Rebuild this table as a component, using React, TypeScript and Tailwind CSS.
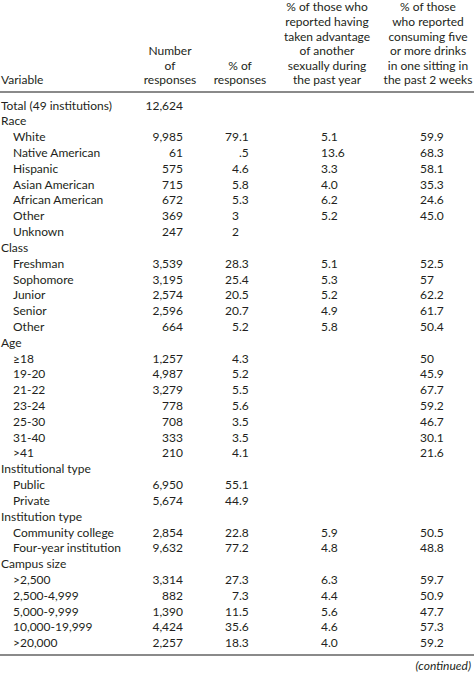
import React from 'react';

type Row = {
  label: string;
  sub?: boolean;
  n?: string;
  pct?: string;
  adv?: string;
  drink?: string;
};

const rows: Row[] = [
  { label: 'Total (49 institutions)', n: '12,624' },
  { label: 'Race' },
  { label: 'White', sub: true, n: '9,985', pct: '79.1', adv: '5.1', drink: '59.9' },
  { label: 'Native American', sub: true, n: '61', pct: '.5', adv: '13.6', drink: '68.3' },
  { label: 'Hispanic', sub: true, n: '575', pct: '4.6', adv: '3.3', drink: '58.1' },
  { label: 'Asian American', sub: true, n: '715', pct: '5.8', adv: '4.0', drink: '35.3' },
  { label: 'African American', sub: true, n: '672', pct: '5.3', adv: '6.2', drink: '24.6' },
  { label: 'Other', sub: true, n: '369', pct: '3', adv: '5.2', drink: '45.0' },
  { label: 'Unknown', sub: true, n: '247', pct: '2' },
  { label: 'Class' },
  { label: 'Freshman', sub: true, n: '3,539', pct: '28.3', adv: '5.1', drink: '52.5' },
  { label: 'Sophomore', sub: true, n: '3,195', pct: '25.4', adv: '5.3', drink: '57' },
  { label: 'Junior', sub: true, n: '2,574', pct: '20.5', adv: '5.2', drink: '62.2' },
  { label: 'Senior', sub: true, n: '2,596', pct: '20.7', adv: '4.9', drink: '61.7' },
  { label: 'Other', sub: true, n: '664', pct: '5.2', adv: '5.8', drink: '50.4' },
  { label: 'Age' },
  { label: '≥18', sub: true, n: '1,257', pct: '4.3', drink: '50' },
  { label: '19-20', sub: true, n: '4,987', pct: '5.2', drink: '45.9' },
  { label: '21-22', sub: true, n: '3,279', pct: '5.5', drink: '67.7' },
  { label: '23-24', sub: true, n: '778', pct: '5.6', drink: '59.2' },
  { label: '25-30', sub: true, n: '708', pct: '3.5', drink: '46.7' },
  { label: '31-40', sub: true, n: '333', pct: '3.5', drink: '30.1' },
  { label: '>41', sub: true, n: '210', pct: '4.1', drink: '21.6' },
  { label: 'Institutional type' },
  { label: 'Public', sub: true, n: '6,950', pct: '55.1' },
  { label: 'Private', sub: true, n: '5,674', pct: '44.9' },
  { label: 'Institution type' },
  { label: 'Community college', sub: true, n: '2,854', pct: '22.8', adv: '5.9', drink: '50.5' },
  { label: 'Four-year institution', sub: true, n: '9,632', pct: '77.2', adv: '4.8', drink: '48.8' },
  { label: 'Campus size' },
  { label: '>2,500', sub: true, n: '3,314', pct: '27.3', adv: '6.3', drink: '59.7' },
  { label: '2,500-4,999', sub: true, n: '882', pct: '7.3', adv: '4.4', drink: '50.9' },
  { label: '5,000-9,999', sub: true, n: '1,390', pct: '11.5', adv: '5.6', drink: '47.7' },
  { label: '10,000-19,999', sub: true, n: '4,424', pct: '35.6', adv: '4.6', drink: '57.3' },
  { label: '>20,000', sub: true, n: '2,257', pct: '18.3', adv: '4.0', drink: '59.2' },
];

function splitPct(p?: string) {
  if (!p) return ['', ''];
  const i = p.indexOf('.');
  if (i < 0) return [p, ''];
  return [p.slice(0, i), p.slice(i)];
}

function HeadCell({ lines, className }: { lines: string[]; className: string }) {
  return (
    <div className={`flex flex-col items-center shrink-0 whitespace-nowrap ${className}`}>
      {lines.map((l, i) => (
        <span key={i}>{l}</span>
      ))}
    </div>
  );
}

export default function App() {
  return (
    <div
      className="w-[474px] h-[680px] bg-white text-[#231f20] text-[12px] leading-[14.6px] overflow-hidden"
      style={{ fontFamily: 'Lato, "Noto Sans", sans-serif' }}
    >
      {/* header */}
      <div className="flex items-end h-[91px] pb-[3px] overflow-hidden">
        <div className="w-[145px] shrink-0 pl-[1px]">Variable</div>
        <HeadCell className="w-[50px]" lines={['Number', 'of', 'responses']} />
        <HeadCell className="w-[90px]" lines={['% of', 'responses']} />
        <HeadCell
          className="w-[84px]"
          lines={['% of those who', 'reported having', 'taken advantage', 'of another', 'sexually during', 'the past year']}
        />
        <HeadCell
          className="w-[116px] ml-[1px]"
          lines={['% of those', 'who reported', 'consuming five', 'or more drinks', 'in one sitting in', 'the past 2 weeks']}
        />
      </div>
      <div className="h-[2px] bg-[#8a8a8a]" />

      {/* body */}
      <div className="pt-[5px] pb-[3px]">
        {rows.map((r, i) => {
          const [whole, frac] = splitPct(r.pct);
          return (
            <div key={i} className="flex h-[15.82px] items-center whitespace-nowrap">
              <div className={`w-[140px] ${r.sub ? 'pl-[13px]' : 'pl-[1px]'}`}>{r.label}</div>
              <div className="w-[43px] text-right">{r.n}</div>
              <div className="w-[56px] text-right">{whole}</div>
              <div className="w-[82px]">{frac}</div>
              <div className="w-[99px]">{r.adv}</div>
              <div className="flex-1">{r.drink}</div>
            </div>
          );
        })}
      </div>
      <div className="h-[2px] bg-[#8a8a8a]" />
      <div className="text-right italic text-[12px] pr-[3px] pt-[3px]">(continued)</div>
    </div>
  );
}
